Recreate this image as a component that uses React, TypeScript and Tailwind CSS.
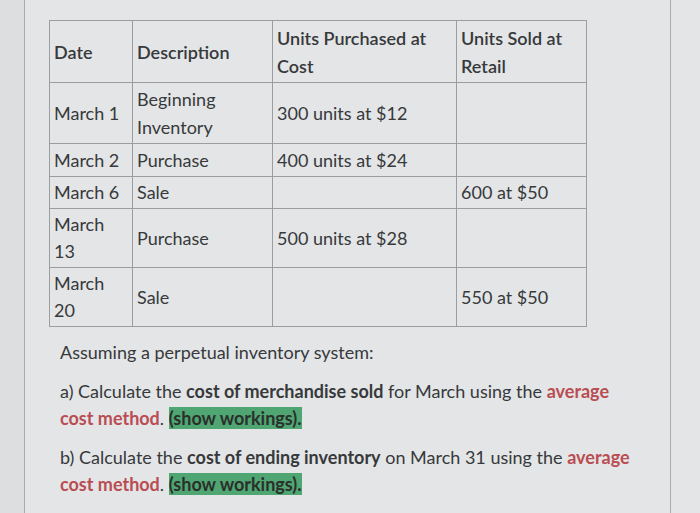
import React from "react";

const font = { fontFamily: "Lato, 'Open Sans', sans-serif" };

function Cell({ children, className = "" }: { children?: React.ReactNode; className?: string }) {
  return (
    <td className={`border border-[#9b9d9f] px-[4px] py-[2px] align-middle ${className}`}>{children}</td>
  );
}

export default function App() {
  const Red = ({ children }: { children: React.ReactNode }) => (
    <span className="text-[#b94d52] font-bold">{children}</span>
  );
  const Hl = ({ children }: { children: React.ReactNode }) => (
    <span className="bg-[#4fa672] text-[#2b2f2c] font-bold">{children}</span>
  );
  return (
    <div className="w-[700px] h-[513px] overflow-hidden flex bg-[#e3e5e7] text-[#37393b]" style={font}>
      <div className="w-[25px] bg-[#dcdedf] border-r border-[#a9abad]" />
      <div className="w-[645px] pl-[24px] pt-[20px] text-[18px] leading-[27px]">
        <table className="border-collapse text-[18px]">
          <colgroup>
            <col className="w-[83px]" />
            <col className="w-[140px]" />
            <col className="w-[184px]" />
            <col className="w-[130px]" />
          </colgroup>
          <tbody>
            <tr className="h-[62px] font-semibold leading-[28px]">
              <Cell>Date</Cell>
              <Cell>Description</Cell>
              <Cell>Units Purchased at<br />Cost</Cell>
              <Cell>Units Sold at<br />Retail</Cell>
            </tr>
            <tr className="h-[60px] leading-[28px]">
              <Cell>March 1</Cell>
              <Cell>Beginning<br />Inventory</Cell>
              <Cell>300 units at $12</Cell>
              <Cell />
            </tr>
            <tr className="h-[33px]">
              <Cell>March 2</Cell>
              <Cell>Purchase</Cell>
              <Cell>400 units at $24</Cell>
              <Cell />
            </tr>
            <tr className="h-[31px]">
              <Cell>March 6</Cell>
              <Cell>Sale</Cell>
              <Cell />
              <Cell>600 at $50</Cell>
            </tr>
            <tr className="h-[59px]">
              <Cell>March<br />13</Cell>
              <Cell>Purchase</Cell>
              <Cell>500 units at $28</Cell>
              <Cell />
            </tr>
            <tr className="h-[58px]">
              <Cell>March<br />20</Cell>
              <Cell>Sale</Cell>
              <Cell />
              <Cell>550 at $50</Cell>
            </tr>
          </tbody>
        </table>
        <div className="pl-[11px] mt-[12px]">
          <p>Assuming a perpetual inventory system:</p>
          <p className="mt-[12px]">
            a) Calculate the <b>cost of merchandise sold</b> for March using the <Red>average</Red>
            <br />
            <Red>cost method</Red>. <Hl>(show workings).</Hl>
          </p>
          <p className="mt-[12px]">
            b) Calculate the <b>cost of ending inventory</b> on March 31 using the <Red>average</Red>
            <br />
            <Red>cost method</Red>. <Hl>(show workings).</Hl>
          </p>
        </div>
      </div>
      <div className="flex-1 border-l border-[#a9abad]" />
    </div>
  );
}
